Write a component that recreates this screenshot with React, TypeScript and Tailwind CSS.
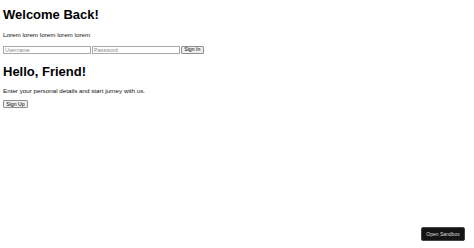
export default function App() {
  return (
    <div className="relative h-[248px] px-[3px] pt-[8px] font-['Liberation_Sans',Arial,sans-serif] text-black">
      <h1 className="text-[13px] font-bold leading-[1.15] mb-[7.8px]">Welcome Back!</h1>
      <p className="text-[6.25px] leading-[1.15] mb-[7.4px] text-[#111]">Lorem lorem lorem lorem lorem</p>
      <form className="flex items-center gap-[1px] h-[9px]" onSubmit={(e) => e.preventDefault()}>
        <input
          type="text"
          placeholder="Username"
          className="w-[88px] h-[8px] border border-[#a9a9a9] px-[1px] text-[5.4px] leading-none placeholder:text-[#8a8a8a] outline-none"
        />
        <input
          type="password"
          placeholder="Password"
          className="w-[88px] h-[8px] border border-[#a9a9a9] px-[1px] text-[5.4px] leading-none placeholder:text-[#8a8a8a] outline-none"
        />
        <button className="h-[8px] px-[2.2px] bg-[#efefef] border border-[#8f8f8f] rounded-[1px] text-[5.2px] leading-none">
          Sign In
        </button>
      </form>
      <h1 className="mt-[10.4px] text-[13px] font-bold leading-[1.15] mb-[7.6px]">Hello, Friend!</h1>
      <p className="text-[6.25px] leading-[1.15] mb-[6px] text-[#111]">Enter your personal details and start jurney with us.</p>
      <div className="flex">
        <button className="h-[7.5px] px-[2.2px] bg-[#efefef] border border-[#8f8f8f] rounded-[1px] text-[5.2px] leading-none">
          Sign Up
        </button>
      </div>
      <button className="fixed right-[9px] bottom-[7px] h-[14px] w-[44px] bg-[#151515] border border-[#444] rounded-[2px] text-[#ddd] text-[5px] leading-none">
        Open Sandbox
      </button>
    </div>
  );
}
